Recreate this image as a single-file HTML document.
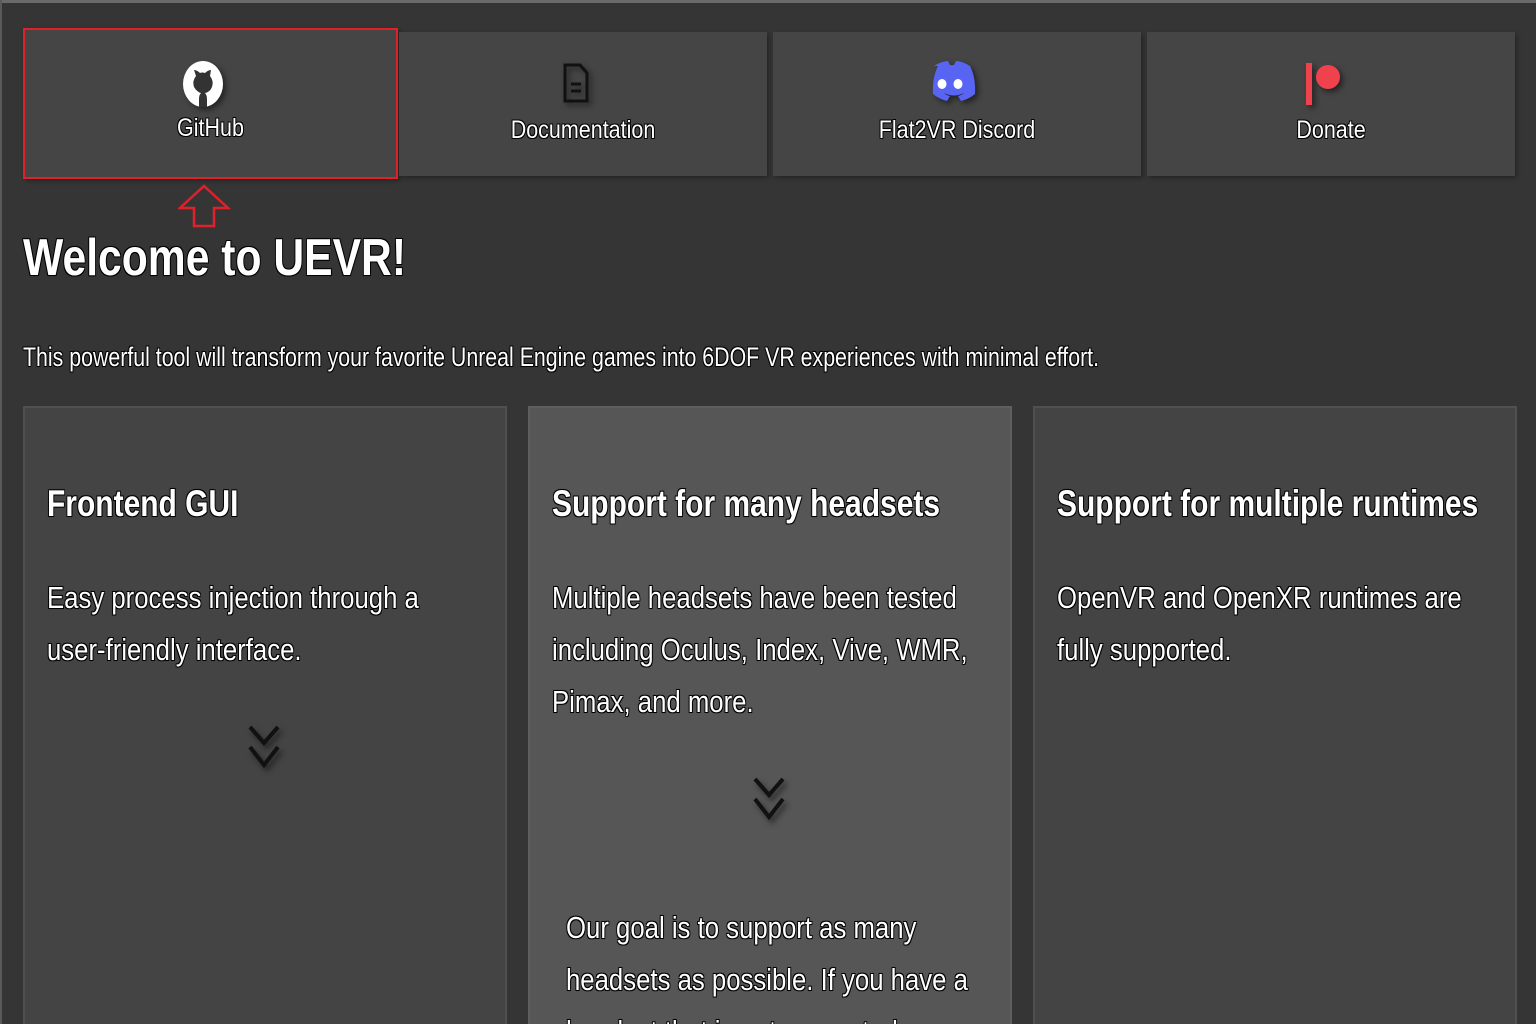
<!DOCTYPE html>
<html style="overflow:hidden;width:1536px;height:1024px"><head><style>
*{margin:0;padding:0;box-sizing:border-box}
body{width:1536px;height:1024px;background:#353535;overflow:hidden;position:relative;font-family:"Liberation Sans",sans-serif;color:#fff}
.t{position:absolute;white-space:nowrap;transform-origin:0 0;text-shadow:-1px -1px 0 #000,1px -1px 0 #000,-1px 1px 0 #000,1px 1px 0 #000,0 0 2px #000}
.tile{position:absolute;top:32px;height:144px;background:#454545;width:368px;box-shadow:2px 2px 4px rgba(0,0,0,.3)}
.tile .l{position:absolute;top:82px;left:0;right:0;text-align:center;font-size:25px;transform:scaleX(.86);text-shadow:-1px -1px 0 #000,1px -1px 0 #000,-1px 1px 0 #000,1px 1px 0 #000}
.tile svg{position:absolute;left:50%;top:26px;transform:translateX(-50%);filter:drop-shadow(3px 3px 3px rgba(0,0,0,.5))}
.card{position:absolute;top:406px;height:630px;width:484px;background:#444;border:2px solid #505050}
.h{font-size:37px;font-weight:bold;transform:scaleX(.81)}
.b{font-size:31px;line-height:52px;transform:scaleX(.83)}
</style></head><body>
<div style="position:absolute;left:0;top:0;width:1536px;height:3px;background:#6a6a6a"></div>
<div style="position:absolute;left:0;top:0;width:2px;height:1024px;background:#5a5a5a"></div>
<div class="tile" style="left:23px;width:375px;border:2px solid #e0202a;top:28px;height:151px">
<svg width="42" height="50" viewBox="0 0 42 50" style="top:28px;left:48%"><ellipse cx="21" cy="26" rx="20" ry="23" fill="#fff"/><path d="M12 12 l2 6 q-4 5 -2 11 q3 5 7 6 q-2 2 -2 6 v8 h8 v-8 q0-4 -2-6 q5-1 7-6 q2-6 -2-11 l1-6 q-3 0 -6 3 q-3-1 -5 0 q-3-3 -6-3z" fill="#333"/></svg>
<div class="l" style="top:84px">GitHub</div></div>
<div class="tile" style="left:399px"><svg width="28" height="42" viewBox="0 0 28 42" style="left:48%;top:30px"><path d="M3 3h15l7 8v28H3z" fill="none" stroke="#111" stroke-width="3"/><path d="M9 22h10M9 29h10" stroke="#111" stroke-width="3"/></svg><div class="l" style="top:84px">Documentation</div></div>
<div class="tile" style="left:773px"><svg width="52" height="48" viewBox="0 0 52 48" style="left:48%"><path d="M10 8 q8-5 14-5 l2 4 q2 0 4 0 l2-4 q6 0 14 5 q6 12 5 28 q-6 5 -14 7 l-3-5 q4-1 6-3 q-10 5-20 0 q2 2 6 3 l-3 5 q-8-2-14-7 q-1-16 5-28z" fill="#5865f2"/><ellipse cx="18" cy="26" rx="4.5" ry="5" fill="#fff"/><ellipse cx="34" cy="26" rx="4.5" ry="5" fill="#fff"/></svg><div class="l" style="top:84px">Flat2VR Discord</div></div>
<div class="tile" style="left:1147px"><svg width="40" height="48" viewBox="0 0 40 48" style="left:48%;top:28px"><rect x="2" y="3" width="6" height="42" fill="#f0424d"/><circle cx="24" cy="17" r="12" fill="#f0424d"/></svg><div class="l" style="top:84px">Donate</div></div>
<svg style="position:absolute;left:178px;top:184px" width="54" height="44" viewBox="0 0 54 44"><path d="M26 2 L50 24 H36 V42 H16 V24 H2Z" fill="none" stroke="#e0202a" stroke-width="2.5"/></svg>
<div class="t" style="left:23px;top:228px;font-size:52px;font-weight:bold;transform:scaleX(.82)">Welcome to UEVR!</div>
<div class="t" style="left:23px;top:342px;font-size:27px;transform:scaleX(.79)">This powerful tool will transform your favorite Unreal Engine games into 6DOF VR experiences with minimal effort.</div>
<div class="card" style="left:23px"></div>
<div class="card" style="left:528px;background:#565656;border-color:#5e5e5e"></div>
<div class="card" style="left:1033px"></div>
<div class="t h" style="left:47px;top:483px">Frontend GUI</div>
<div class="t b" style="left:47px;top:572px">Easy process injection through a<br>user-friendly interface.</div>
<div class="t h" style="left:552px;top:483px">Support for many headsets</div>
<div class="t b" style="left:552px;top:572px">Multiple headsets have been tested<br>including Oculus, Index, Vive, WMR,<br>Pimax, and more.</div>
<div class="t b" style="left:566px;top:902px">Our goal is to support as many<br>headsets as possible. If you have a<br>headset that is not supported</div>
<div class="t h" style="left:1057px;top:483px">Support for multiple runtimes</div>
<div class="t b" style="left:1057px;top:572px">OpenVR and OpenXR runtimes are<br>fully supported.</div>
<svg style="position:absolute;left:246px;top:723px;filter:drop-shadow(3px 4px 3px rgba(0,0,0,.5))" width="36" height="48" viewBox="0 0 36 48"><path d="M4 4 L18 20 L32 4 M4 24 L18 42 L32 24" fill="none" stroke="#111" stroke-width="4"/></svg>
<svg style="position:absolute;left:751px;top:775px;filter:drop-shadow(3px 4px 3px rgba(0,0,0,.5))" width="36" height="48" viewBox="0 0 36 48"><path d="M4 4 L18 20 L32 4 M4 24 L18 42 L32 24" fill="none" stroke="#111" stroke-width="4"/></svg>
</body></html>
